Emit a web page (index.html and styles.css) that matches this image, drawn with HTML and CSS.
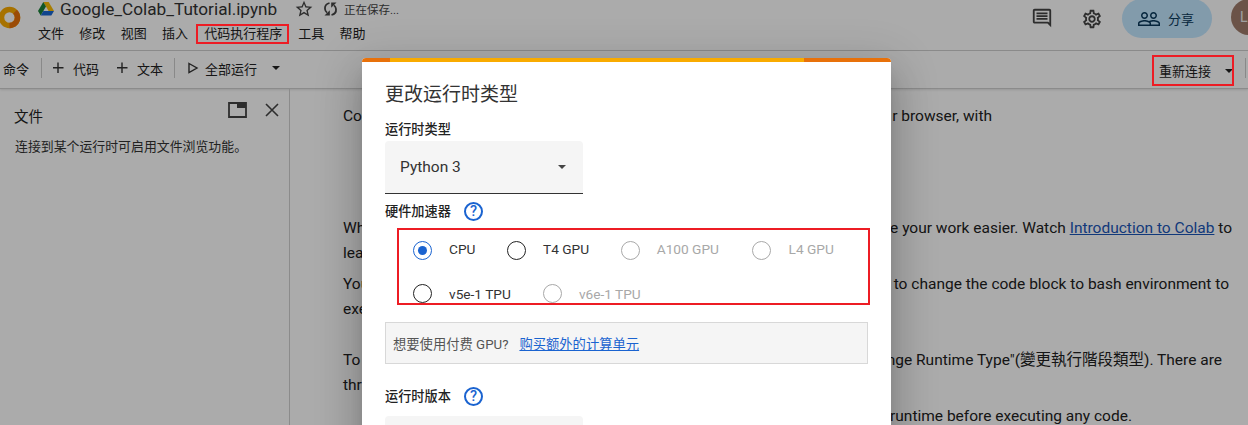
FILE: index.html
```html
<!DOCTYPE html>
<html lang="zh-CN">
<head>
<meta charset="utf-8">
<title>Google_Colab_Tutorial.ipynb</title>
<link rel="stylesheet" href="styles.css">
</head>
<body>
<div class="app">
  <header class="header">
    <div class="logo">
      <svg width="30" height="30" viewBox="0 0 30 30"><circle cx="14.500" cy="14.500" r="8" fill="none" stroke="#f9ab00" stroke-width="5.500"/><path d="M14.500 22.500a8 8 0 0 0 8-8 8 8 0 0 0-2.500-5.800" fill="none" stroke="#e8710a" stroke-width="5.500"/></svg>
    </div>
    <div class="doc">
      <div class="doc-row">
        <svg class="drive" width="16" height="14" viewBox="0 0 16 14"><path d="M5.300 0h5.400l5.300 9h-5.400z" fill="#fbbc04"/><path d="M5.300 0 0 9l2.700 4.600L8 4.600z" fill="#188038"/><path d="M5.400 9H16l-2.700 4.600H2.700z" fill="#1967d2"/></svg>
        <span class="doc-title">Google_Colab_Tutorial.ipynb</span>
        <svg class="star" width="20" height="20" viewBox="0 0 24 24"><path fill="#444" d="M22 9.240l-7.190-.62L12 2 9.190 8.630 2 9.240l5.460 4.730L5.820 21 12 17.270 18.180 21l-1.630-7.030L22 9.240zM12 15.400l-3.760 2.270 1-4.280-3.320-2.880 4.380-.38L12 6.100l1.710 4.040 4.380.38-3.320 2.880 1 4.280L12 15.400z"/></svg>
        <svg class="sync" width="15" height="14" viewBox="0 0 15 14"><g><path d="M6.500 1C3.300 1.800 1.700 4.200 2 7c.15 1.500.9 2.700 2 3.600" fill="none" stroke="#444" stroke-width="1.800"/><path d="M1.500 13.500h5.300V8.200z" fill="#444"/></g><g transform="rotate(180 7.500 7)"><path d="M6.500 1C3.300 1.800 1.700 4.200 2 7c.15 1.500.9 2.700 2 3.600" fill="none" stroke="#444" stroke-width="1.800"/><path d="M1.500 13.500h5.300V8.200z" fill="#444"/></g></svg>
        <span class="saving">正在保存...</span>
      </div>
      <nav class="menu">
        <span class="menu-item">文件</span>
        <span class="menu-item">修改</span>
        <span class="menu-item">视图</span>
        <span class="menu-item">插入</span>
        <span class="menu-item marked">代码执行程序</span>
        <span class="menu-item">工具</span>
        <span class="menu-item">帮助</span>
      </nav>
    </div>
    <div class="header-actions">
      <svg class="ic-comment" width="22" height="22" viewBox="0 0 24 24"><path fill="#444" d="M21.990 4c0-1.100-.89-2-1.990-2H4c-1.100 0-2 .9-2 2v12c0 1.100.9 2 2 2h14l4 4-.01-18zM20 4v13.170L18.830 16H4V4h16zM6 12h12v2H6zm0-3h12v2H6zm0-3h12v2H6z"/></svg>
      <svg class="ic-gear" width="22" height="22" viewBox="0 0 24 24"><path fill="#444" d="M19.430 12.980c.04-.32.07-.64.07-.98 0-.34-.03-.66-.07-.98l2.110-1.650c.19-.15.24-.42.12-.64l-2-3.460c-.09-.16-.26-.25-.44-.25-.06 0-.12.01-.17.03l-2.490 1c-.52-.4-1.080-.73-1.690-.98l-.38-2.650C14.460 2.180 14.250 2 14 2h-4c-.25 0-.46.18-.49.42l-.38 2.650c-.61.25-1.170.59-1.690.98l-2.490-1c-.06-.02-.12-.03-.18-.03-.17 0-.34.09-.43.25l-2 3.460c-.13.22-.07.49.12.64l2.110 1.650c-.04.32-.07.65-.07.98 0 .33.03.66.07.98l-2.110 1.650c-.19.15-.24.42-.12.64l2 3.460c.09.16.26.25.44.25.06 0 .12-.01.17-.03l2.490-1c.52.4 1.080.73 1.690.98l.38 2.650c.03.24.24.42.49.42h4c.25 0 .46-.18.49-.42l.38-2.650c.61-.25 1.170-.59 1.690-.98l2.490 1c.06.02.12.03.18.03.17 0 .34-.09.43-.25l2-3.460c.12-.22.07-.49-.12-.64l-2.110-1.650zm-1.980-1.710c.04.31.05.52.05.73 0 .21-.02.43-.05.73l-.14 1.130.89.7 1.080.84-.7 1.210-1.270-.51-1.040-.42-.9.68c-.43.32-.84.56-1.250.73l-1.060.43-.16 1.130-.2 1.350h-1.400l-.19-1.350-.16-1.130-1.060-.43c-.43-.18-.83-.41-1.230-.71l-.91-.7-1.060.43-1.270.51-.7-1.210 1.080-.84.89-.7-.14-1.130c-.03-.31-.05-.54-.05-.74s.02-.43.05-.73l.14-1.130-.89-.7-1.080-.84.7-1.210 1.270.51 1.040.42.9-.68c.43-.32.84-.56 1.250-.73l1.060-.43.16-1.130.2-1.350h1.390l.19 1.350.16 1.130 1.060.43c.43.18.83.41 1.230.71l.91.7 1.060-.43 1.270-.51.7 1.210-1.070.85-.89.7.14 1.130zM12 8c-2.210 0-4 1.790-4 4s1.790 4 4 4 4-1.790 4-4-1.790-4-4-4zm0 6c-1.100 0-2-.9-2-2s.9-2 2-2 2 .9 2 2-.9 2-2 2z"/></svg>
      <div class="share">
        <svg width="24" height="24" viewBox="0 0 24 24"><path fill="#0b3a5c" d="M16.500 13c-1.200 0-3.070.34-4.500 1-1.430-.67-3.300-1-4.500-1C5.330 13 1 14.080 1 16.250V19h22v-2.750c0-2.170-4.330-3.250-6.500-3.250zm-4 4.500h-10v-1.250c0-.54 2.560-1.750 5-1.750s5 1.210 5 1.750v1.250zm9 0H14v-1.250c0-.46-.2-.86-.52-1.220.88-.3 1.960-.53 3.020-.53 2.440 0 5 1.210 5 1.750v1.250zM7.500 12c1.930 0 3.500-1.570 3.500-3.500S9.430 5 7.500 5 4 6.570 4 8.500 5.570 12 7.500 12zm0-5.500c1.100 0 2 .9 2 2s-.9 2-2 2-2-.9-2-2 .9-2 2-2zm9 5.500c1.930 0 3.500-1.570 3.500-3.500S18.430 5 16.500 5 13 6.570 13 8.500s1.570 3.500 3.500 3.500zm0-5.500c1.100 0 2 .9 2 2s-.9 2-2 2-2-.9-2-2 .9-2 2-2z"/></svg>
        <span>分享</span>
      </div>
      <div class="avatar">L</div>
    </div>
  </header>

  <div class="toolbar">
    <span class="tb-cmd">命令</span>
    <span class="tb-sep"></span>
    <span class="tb-btn"><svg width="14" height="14" viewBox="0 0 14 14"><path d="M6 1.500v10.500M1 6.750h10.500" stroke="#333" stroke-width="1.400"/></svg>代码</span>
    <span class="tb-btn"><svg width="14" height="14" viewBox="0 0 14 14"><path d="M6 1.500v10.500M1 6.750h10.500" stroke="#333" stroke-width="1.400"/></svg>文本</span>
    <span class="tb-sep"></span>
    <span class="tb-btn tb-run"><svg width="12" height="14" viewBox="0 0 12 14"><path d="M2 2.500l8 4.500-8 4.500z" fill="none" stroke="#333" stroke-width="1.400"/></svg>全部运行</span>
    <span class="caret tb-caret"></span>
    <span class="connect"><span>重新连接</span><span class="caret"></span></span>
    <span class="tb-sep tb-end"></span>
  </div>

  <div class="main">
    <aside class="side">
      <div class="side-head">
        <span class="side-title">文件</span>
        <svg class="ic-window" width="19" height="16" viewBox="0 0 19 16"><path d="M1 1h17v14H1z" fill="none" stroke="#444" stroke-width="1.800"/><path d="M9 1h9v5H9z" fill="#444"/></svg>
        <svg class="ic-close" width="14" height="14" viewBox="0 0 14 14"><path d="M1 1l12 12M13 1 1 13" stroke="#444" stroke-width="1.600"/></svg>
      </div>
      <p class="side-note">连接到某个运行时可启用文件浏览功能。</p>
    </aside>
    <section class="doc-body">
      <div class="line l1"><span>Co</span><span class="end-a">r browser, with</span></div>
      <div class="line l2"><span>Wh</span><span>e your work easier. Watch <a class="doc-link">Introduction to Colab</a> to</span></div>
      <div class="line"><span>lea</span></div>
      <div class="line l3"><span>You</span><span class="end-d">to change the code block to bash environment to</span></div>
      <div class="line"><span>exe</span></div>
      <div class="line l4"><span>To</span><span class="end-b">nge Runtime Type"(變更執行階段類型). There are</span></div>
      <div class="line"><span>thr</span></div>
      <div class="line l5"><span></span><span class="end-c">runtime before executing any code.</span></div>
    </section>
  </div>

  <div class="scrim"></div>

  <div class="dialog">
    <div class="dlg-bar"><i class="seg-a"></i><i class="seg-b"></i><i class="seg-c"></i></div>
    <div class="dlg-body">
      <h2 class="dlg-title">更改运行时类型</h2>
      <div class="field-label">运行时类型</div>
      <div class="select"><span>Python 3</span><span class="caret select-caret"></span></div>
      <div class="field-label label-hw">硬件加速器<span class="help">?</span></div>
      <div class="radio-box">
        <div class="radio-row row1">
          <label class="radio-item"><span class="radio on"></span>CPU</label>
          <label class="radio-item"><span class="radio"></span>T4 GPU</label>
          <label class="radio-item off"><span class="radio"></span>A100 GPU</label>
          <label class="radio-item off last"><span class="radio"></span>L4 GPU</label>
        </div>
        <div class="radio-row row2">
          <label class="radio-item"><span class="radio"></span>v5e-1 TPU</label>
          <label class="radio-item off"><span class="radio"></span>v6e-1 TPU</label>
        </div>
      </div>
      <div class="notice">想要使用付费 GPU?<a class="notice-link">购买额外的计算单元</a></div>
      <div class="field-label label-ver">运行时版本<span class="help">?</span></div>
      <div class="select select-2"></div>
    </div>
  </div>
</div>
</body>
</html>
```
FILE: styles.css
```css
* { box-sizing: border-box; }
html, body { margin: 0; padding: 0; height: 100%; overflow: hidden; }
body { background: #fff; font-family: Roboto, "Noto Sans CJK SC", sans-serif; color: #222; }
.app { position: relative; width: 1248px; height: 425px; overflow: hidden; display: flex; flex-direction: column; }

/* header */
.header { height: 51px; flex: none; display: flex; border-bottom: 1px solid #d0d0d0; background: #fff; }
.logo { width: 38px; flex: none; margin-left: -5px; padding-top: 3px; }
.logo svg { display: block; }
.doc { flex: none; margin-left: 5px; }
.doc-row { display: flex; align-items: center; height: 18px; }
.drive { margin-right: 6px; flex: none; }
.doc-title { font-size: 17.200px; line-height: 18px; color: #333; width: 234px; white-space: nowrap; }
.sync { margin-left: 9px; }
.saving { font-size: 11.500px; margin-left: 6px; color: #444; }
.menu { display: flex; margin-top: 6px; font-size: 13px; line-height: 20px; color: #222; }
.menu-item { margin-right: 15.300px; white-space: nowrap; }
.menu-item.marked { position: relative; padding: 0 7px 0 8px; margin: 0 9px 0 -7px; }
.marked::after, .connect::after { content: ""; position: absolute; inset: 0; border: 2px solid #ed1c24; z-index: 2; }
.header-actions { margin-left: auto; display: flex; align-items: flex-start; }
.ic-comment { margin-top: 7px; }
.ic-gear { margin: 8px 0 0 28px; }
.share { margin: -1px 0 0 19px; width: 90px; height: 39px; border-radius: 20px; background: #c2e7ff; display: flex; align-items: center; padding-left: 15px; gap: 7px; font-size: 13px; color: #0b3a5c; }
.avatar { width: 36px; height: 36px; border-radius: 50%; background: #a07d6c; color: #eee; margin: -1px -19px 0 19px; font-size: 14px; line-height: 36px; padding-left: 9px; flex: none; }

/* toolbar */
.toolbar { height: 38px; flex: none; display: flex; align-items: center; padding-bottom: 3px; font-size: 13px; color: #222; border-bottom: 1px solid #d0d0d0; box-shadow: 0 1px 2px rgba(0,0,0,.12); }
.tb-cmd { margin-left: 3px; }
.tb-sep { width: 1px; height: 20px; background: #ccc; margin: 0 10px 0 12px; flex: none; }
.tb-btn { display: inline-flex; align-items: center; gap: 7px; margin-right: 17px; }
.tb-btn + .tb-sep { margin-left: -6px; }
.tb-run { margin-left: 2px; gap: 6px; margin-right: 0; }
.caret { display: inline-block; width: 0; height: 0; border-left: 4px solid transparent; border-right: 4px solid transparent; border-top: 4px solid #222; }
.tb-caret { margin-left: 15px; }
.connect { position: relative; margin-left: auto; align-self: flex-start; width: 82px; height: 31px; margin-top: 4px; display: flex; align-items: center; justify-content: space-between; padding: 0 1px 0 7px; }
.tb-end { margin: 0 2px 0 11px; }

/* main */
.main { flex: 1; display: flex; min-height: 0; }
.side { width: 290px; flex: none; border-right: 1px solid #d0d0d0; }
.side-head { display: flex; align-items: center; height: 28px; margin-top: 12px; padding: 0 0 0 14px; }
.side-title { font-size: 14.500px; flex: 1; }
.ic-window { margin-right: 18px; margin-top: -10px; }
.ic-close { margin-right: 10px; margin-top: -10px; }
.side-note { margin: 9px 0 0 15px; font-size: 12.900px; line-height: 18px; color: #333; }
.doc-body { flex: 1; padding: 15px 16px 0 53px; font-size: 15.500px; line-height: 25px; color: #222; }
.line { display: flex; justify-content: space-between; height: 25px; white-space: nowrap; }
.l1 { margin-bottom: 87px; }
.l3 { margin-top: 6px; }
.l4 { margin-top: 26px; }
.l5 { margin-top: 6px; }
.end-a { margin-right: 240px; }
.end-b { margin-right: 10px; }
.end-c { margin-right: 100px; }
.end-d { margin-right: 3px; }
.doc-link { color: #1a56b8; text-decoration: underline; }

/* dialog */
.scrim { position: absolute; inset: 0; z-index: 1; background: rgba(0,0,0,.33); }
.dialog { position: absolute; z-index: 3; left: 362px; top: 58px; width: 529px; height: 420px; background: #fff; border-radius: 4px 4px 0 0; overflow: hidden; box-shadow: 0 11px 15px -7px rgba(0,0,0,.2), 0 24px 38px 3px rgba(0,0,0,.14), 0 9px 46px 8px rgba(0,0,0,.12); }
.dlg-bar { display: flex; height: 4px; }
.dlg-bar i { display: block; height: 4px; }
.seg-a { width: 28px; background: #e8710a; }
.seg-b { width: 414px; background: #f9ab00; }
.seg-c { flex: 1; background: #e8710a; }
.dlg-body { padding: 0 23px; }
.dlg-title { margin: 21px 0 0; font-size: 19px; line-height: 24px; font-weight: 400; color: #333; }
.field-label { display: flex; align-items: center; font-size: 13.200px; font-weight: 500; line-height: 18px; color: #222; }
.dlg-title + .field-label { margin-top: 14px; }
.select { width: 198px; height: 53px; margin-top: 2px; background: #f5f5f5; border-bottom: 1px solid #333; border-radius: 4px 4px 0 0; display: flex; align-items: center; justify-content: space-between; padding: 0 17px 0 15px; font-size: 15.500px; color: #333; }
.select-caret { border-top-color: #444; border-width: 4.500px 4.500px 0; }
.select-2 { margin-top: 10px; }
.label-hw { margin-top: 8px; }
.help { width: 19px; height: 19px; margin-left: 13px; border: 2px solid #1a63d0; border-radius: 50%; color: #1a63d0; font-size: 14.500px; line-height: 15px; text-align: center; font-weight: 500; }
.radio-box { width: 473px; height: 77px; margin: 7px 0 0 12px; border: 2px solid #ed1c24; padding: 11px 0 0 14px; overflow: hidden; }
.radio-row { display: flex; height: 19px; }
.row1 { gap: 31.600px; }
.row2 { margin-top: 24px; gap: 32px; }
.radio-item { display: flex; align-items: center; gap: 17px; font-size: 13.700px; color: #333; white-space: nowrap; }
.row1 .radio-item { align-items: flex-start; line-height: 17px; }
.radio-item.last { margin-left: 1px; gap: 18px; }
.radio-item.off { color: #a8a8a8; }
.radio { width: 19px; height: 19px; border: 1.500px solid #222; border-radius: 50%; flex: none; display: flex; align-items: center; justify-content: center; }
.off .radio { border-color: #a8a8a8; }
.radio.on { border-color: #1a63d0; }
.radio.on::after { content: ""; width: 9px; height: 9px; border-radius: 50%; background: #1a63d0; }
.notice { width: 483px; height: 42px; margin-top: 17px; border: 1px solid #d8d8d8; background: #f5f5f5; display: flex; align-items: center; padding-left: 7px; font-size: 13.300px; color: #555; }
.notice-link { margin-left: 11px; color: #1a63d0; text-decoration: underline; }
.label-ver { margin-top: 23px; }
```
